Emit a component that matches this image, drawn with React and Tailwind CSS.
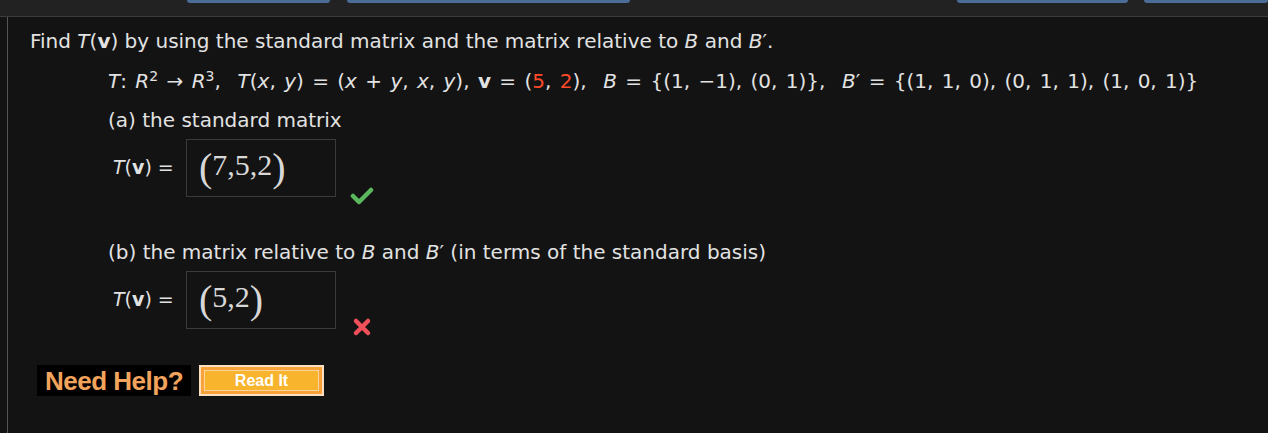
export default function App() {
  const tabs = [
    'ml-[187px] w-[143px]',
    'ml-[17px] w-[283px]',
    'ml-[327px] w-[171px]',
    'ml-[16px] flex-1',
  ];

  return (
    <div className="w-[1268px] h-[433px] bg-[#131313] overflow-hidden text-[#e2e2e2] font-['DejaVu_Sans',sans-serif]">
      {/* top bar */}
      <div className="h-[17px] bg-[#222222] border-b border-[#3c3c3c] flex items-start">
        {tabs.map((t, i) => (
          <div key={i} className={`${t} h-[3px] bg-[#4a6c96] rounded-b-[4px]`} />
        ))}
      </div>

      <div className="flex h-[416px]">
        <div className="ml-[7px] w-px bg-[#555555]" />

        <div className="pl-[22px] pt-[11px] flex-1">
          <p className="text-[20px] leading-[26px] whitespace-nowrap">
            Find <i>T</i>(<b>v</b>) by using the standard matrix and the matrix relative to <i>B</i> and <i>B</i>′.
          </p>

          <div className="pl-[78px]">
            <p className="mt-[14px] text-[20px] leading-[26px] whitespace-nowrap [word-spacing:2px]">
              <i>T</i>: <i>R</i><sup className="text-[14px]">2</sup> → <i>R</i><sup className="text-[14px]">3</sup>,&nbsp;&nbsp;
              <i>T</i>(<i>x</i>, <i>y</i>) = (<i>x</i> + <i>y</i>, <i>x</i>, <i>y</i>), <b>v</b> = (
              <span className="text-[#ff4a2a]">5</span>, <span className="text-[#ff4a2a]">2</span>),&nbsp;&nbsp;
              <i>B</i> = {'{'}(1, −1), (0, 1){'}'},&nbsp;&nbsp;
              <i>B</i>′ = {'{'}(1, 1, 0), (0, 1, 1), (1, 0, 1){'}'}
            </p>

            <p className="mt-[13px] text-[20px] leading-[26px]">
              (a) the standard matrix
            </p>

            <div className="mt-[6px] flex items-start">
              <span className="mt-[16px] ml-[5px] w-[73px] text-[19px] leading-[24px] whitespace-nowrap">
                <i>T</i>(<b>v</b>) =
              </span>
              <div className="w-[150px] h-[58px] border border-[#3a3a3a] flex items-center pl-[12px]">
                <span className="font-['Liberation_Serif',serif] text-[30px] leading-none text-[#d8d8d8]">
                  <span className="text-[40px] align-middle">(</span>7,5,2<span className="text-[40px] align-middle">)</span>
                </span>
              </div>
              <svg className="ml-[14px] mt-[48px]" width="24" height="18" viewBox="0 0 24 18">
                <path d="M3 9 L9 15 L21 3" fill="none" stroke="#5cb85c" strokeWidth="4.5" strokeLinecap="round" strokeLinejoin="round" />
              </svg>
            </div>

            <p className="mt-[34px] text-[20px] leading-[26px] whitespace-nowrap">
              (b) the matrix relative to <i>B</i> and <i>B</i>′ (in terms of the standard basis)
            </p>

            <div className="mt-[6px] flex items-start">
              <span className="mt-[16px] ml-[5px] w-[73px] text-[19px] leading-[24px] whitespace-nowrap">
                <i>T</i>(<b>v</b>) =
              </span>
              <div className="w-[150px] h-[58px] border border-[#3a3a3a] flex items-center pl-[12px]">
                <span className="font-['Liberation_Serif',serif] text-[30px] leading-none text-[#d8d8d8]">
                  <span className="text-[40px] align-middle">(</span>5,2<span className="text-[40px] align-middle">)</span>
                </span>
              </div>
              <svg className="ml-[16px] mt-[46px]" width="20" height="20" viewBox="0 0 20 20">
                <path d="M4 4 L16 16 M16 4 L4 16" fill="none" stroke="#f0505a" strokeWidth="4.5" strokeLinecap="round" />
              </svg>
            </div>
          </div>

          <div className="mt-[28px] ml-[7px] flex items-center gap-[8px]">
            <div className="bg-black h-[31px] w-[154px] flex items-center justify-center">
              <span className="font-['Liberation_Sans',sans-serif] font-bold text-[26px] leading-none text-[#f2a35c] tracking-[-0.5px]">
                Need Help?
              </span>
            </div>
            <div className="h-[31px] w-[125px] bg-[#fde0c0] p-[2px]">
              <div className="h-full w-full bg-[#f8a23a] p-[3px]">
                <div className="h-full w-full bg-[#f8b42c] border border-[#fcd4a0] flex items-center justify-center">
                  <span className="font-['Liberation_Sans',sans-serif] font-bold text-[16px] leading-none text-white">
                    Read It
                  </span>
                </div>
              </div>
            </div>
          </div>
        </div>
      </div>
    </div>
  );
}
